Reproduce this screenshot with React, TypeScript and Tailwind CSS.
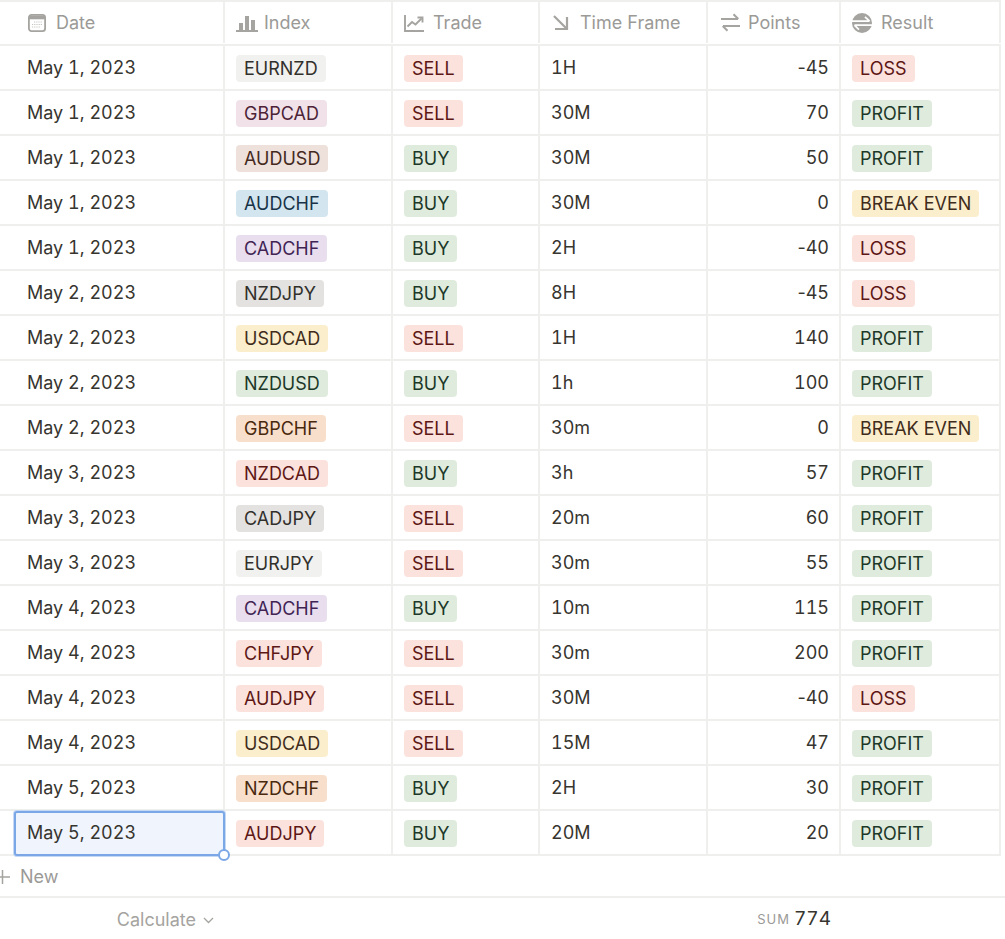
import React from 'react';

type Tone = 'gray' | 'light' | 'pink' | 'brown' | 'blue' | 'purple' | 'yellow' | 'green' | 'orange' | 'red';

const tones: Record<Tone, string> = {
  light: 'bg-[#f1f1ef] text-[#32302c]',
  gray: 'bg-[#e3e2e0] text-[#32302c]',
  pink: 'bg-[#f1e2ea] text-[#4c2337]',
  brown: 'bg-[#eee0da] text-[#442a1e]',
  blue: 'bg-[#d3e5ef] text-[#183347]',
  purple: 'bg-[#e8deee] text-[#412454]',
  yellow: 'bg-[#fbeecd] text-[#402c1b]',
  green: 'bg-[#dfecdd] text-[#1c3829]',
  orange: 'bg-[#f8dfcc] text-[#49290e]',
  red: 'bg-[#fbe2dd] text-[#5d1715]',
};

const indexTone: Record<string, Tone> = {
  EURNZD: 'light',
  GBPCAD: 'pink',
  AUDUSD: 'brown',
  AUDCHF: 'blue',
  CADCHF: 'purple',
  NZDJPY: 'gray',
  USDCAD: 'yellow',
  NZDUSD: 'green',
  GBPCHF: 'orange',
  NZDCAD: 'red',
  CADJPY: 'gray',
  EURJPY: 'light',
  CHFJPY: 'red',
  AUDJPY: 'red',
  NZDCHF: 'orange',
};

const resultTone: Record<string, Tone> = {
  LOSS: 'red',
  PROFIT: 'green',
  'BREAK EVEN': 'yellow',
};

const rows: [string, string, string, string, number, string][] = [
  ['May 1, 2023', 'EURNZD', 'SELL', '1H', -45, 'LOSS'],
  ['May 1, 2023', 'GBPCAD', 'SELL', '30M', 70, 'PROFIT'],
  ['May 1, 2023', 'AUDUSD', 'BUY', '30M', 50, 'PROFIT'],
  ['May 1, 2023', 'AUDCHF', 'BUY', '30M', 0, 'BREAK EVEN'],
  ['May 1, 2023', 'CADCHF', 'BUY', '2H', -40, 'LOSS'],
  ['May 2, 2023', 'NZDJPY', 'BUY', '8H', -45, 'LOSS'],
  ['May 2, 2023', 'USDCAD', 'SELL', '1H', 140, 'PROFIT'],
  ['May 2, 2023', 'NZDUSD', 'BUY', '1h', 100, 'PROFIT'],
  ['May 2, 2023', 'GBPCHF', 'SELL', '30m', 0, 'BREAK EVEN'],
  ['May 3, 2023', 'NZDCAD', 'BUY', '3h', 57, 'PROFIT'],
  ['May 3, 2023', 'CADJPY', 'SELL', '20m', 60, 'PROFIT'],
  ['May 3, 2023', 'EURJPY', 'SELL', '30m', 55, 'PROFIT'],
  ['May 4, 2023', 'CADCHF', 'BUY', '10m', 115, 'PROFIT'],
  ['May 4, 2023', 'CHFJPY', 'SELL', '30m', 200, 'PROFIT'],
  ['May 4, 2023', 'AUDJPY', 'SELL', '30M', -40, 'LOSS'],
  ['May 4, 2023', 'USDCAD', 'SELL', '15M', 47, 'PROFIT'],
  ['May 5, 2023', 'NZDCHF', 'BUY', '2H', 30, 'PROFIT'],
  ['May 5, 2023', 'AUDJPY', 'BUY', '20M', 20, 'PROFIT'],
];

const grid = 'grid grid-cols-[225px_168px_147px_168px_133px_160px] w-[1001px]';

const CalendarIcon = () => (
  <svg width="18" height="18" viewBox="0 0 18 18" className="shrink-0">
    <rect x="0.9" y="0.9" width="16.2" height="16.2" rx="2.6" fill="none" stroke="#a5a4a0" strokeWidth="1.8" />
    <path d="M1 1.5h16v3.8H1z" fill="#a5a4a0" />
    <path d="M6 8h8M4 10.5h10M4 13h8" stroke="#c6c5c2" strokeWidth="1.2" strokeDasharray="1.2 1" />
  </svg>
);

const BarsIcon = () => (
  <svg width="22" height="18" viewBox="0 0 22 18" className="shrink-0" fill="#a5a4a0">
    <rect x="3" y="9" width="4" height="7" />
    <rect x="9" y="2" width="4" height="14" />
    <rect x="15" y="6" width="4" height="10" />
    <rect x="0" y="16" width="22" height="2" />
  </svg>
);

const TrendIcon = () => (
  <svg width="20" height="18" viewBox="0 0 20 18" className="shrink-0" fill="none" stroke="#a5a4a0" strokeWidth="1.9">
    <path d="M1 1v16h19" />
    <path d="M3.5 12.5l4.5-4.5 3.5 2.5 6-6" />
    <path d="M13.5 3.5h5v5" />
  </svg>
);

const ArrowDownRightIcon = () => (
  <svg width="16" height="16" viewBox="0 0 16 16" className="shrink-0" fill="none" stroke="#a5a4a0" strokeWidth="2.2">
    <path d="M1 1l13 13" />
    <path d="M14 2v12H2" />
  </svg>
);

const SwapIcon = () => (
  <svg width="19" height="19" viewBox="0 0 19 19" className="shrink-0" fill="none" stroke="#a5a4a0" strokeWidth="2">
    <path d="M0 6h17M12.5 1.2L17.3 6" />
    <path d="M19 13H2M6.5 17.8L1.7 13" />
  </svg>
);

const ResultIcon = () => (
  <svg width="20" height="20" viewBox="0 0 20 20" className="shrink-0">
    <circle cx="10" cy="10" r="10" fill="#a5a4a0" />
    <path d="M-1 8.2h18.5M13 3.8l4.6 4.4M21 12.2H2.5M7 16.6l-4.6-4.4" fill="none" stroke="#fff" strokeWidth="1.8" />
  </svg>
);

const Tag = ({ label, tone }: { label: string; tone: Tone }) => (
  <span className={`inline-flex h-[27px] items-center rounded-[4px] px-2 text-[18px] leading-none ${tones[tone]}`}>
    {label}
  </span>
);

const HeaderCell = ({ icon, label, gap, pad }: { icon: React.ReactNode; label: string; gap: string; pad: string }) => (
  <div className={`flex h-full items-center border-r-2 border-[#efefee] text-[18px] text-[#9b9a97] ${gap} ${pad}`}>
    {icon}
    <span>{label}</span>
  </div>
);

const cell = 'h-full border-r-2 border-[#efefee]';

export default function App() {
  return (
    <div className="h-[939px] w-[1005px] overflow-hidden bg-white font-['Inter',sans-serif] text-[#37352f]">
      <div className={`${grid} h-[46px] border-y-2 border-[#efefee] pb-[1px]`}>
        <HeaderCell icon={<CalendarIcon />} label="Date" gap="gap-[10px]" pad="pl-[28px]" />
        <HeaderCell icon={<BarsIcon />} label="Index" gap="gap-[6px]" pad="pl-[11px]" />
        <HeaderCell icon={<TrendIcon />} label="Trade" gap="gap-[9px]" pad="pl-[11px]" />
        <HeaderCell icon={<ArrowDownRightIcon />} label="Time Frame" gap="gap-[11px]" pad="pl-[13px]" />
        <HeaderCell icon={<SwapIcon />} label="Points" gap="gap-[8px]" pad="pl-[13px]" />
        <HeaderCell icon={<ResultIcon />} label="Result" gap="gap-[9px]" pad="pl-[11px]" />
      </div>

      {rows.map((r, i) => {
        const selected = i === rows.length - 1;
        return (
          <div key={i} className={`${grid} h-[45px] border-b-2 border-[#efefee]`}>
            <div className={`${cell} relative pl-[27px] pt-[9px] text-[18px] leading-[26px] tabular-nums`}>
              {selected && (
                <div className="absolute -bottom-[2px] left-[14px] -right-[2px] top-[0px] rounded-[3px] border-2 border-[#7ba7e6] bg-[#f0f4fc] shadow-[0_0_0_1px_#c5d9f5]">
                  <span className="absolute -bottom-[7px] -right-[7px] h-[12px] w-[12px] rounded-full border-2 border-[#7ba7e6] bg-white" />
                </div>
              )}
              <span className="relative">{r[0]}</span>
            </div>
            <div className={`${cell} pl-[11px] pt-[9px]`}>
              <Tag label={r[1]} tone={indexTone[r[1]]} />
            </div>
            <div className={`${cell} pl-[11px] pt-[9px]`}>
              <Tag label={r[2]} tone={r[2] === 'SELL' ? 'red' : 'green'} />
            </div>
            <div className={`${cell} pl-[11px] pt-[9px] text-[18px] leading-[26px] tabular-nums`}>{r[3]}</div>
            <div className={`${cell} pr-[10px] pt-[9px] text-right text-[18px] leading-[26px]`}>
              {r[4] < 0 && <span>-</span>}
              <span className="tabular-nums">{Math.abs(r[4])}</span>
            </div>
            <div className={`${cell} pl-[11px] pt-[9px]`}>
              <Tag label={r[5]} tone={resultTone[r[5]]} />
            </div>
          </div>
        );
      })}

      <div className="flex h-[42px] items-center gap-[9px] border-b-2 border-[#efefee] pt-[1px] text-[18px] text-[#9b9a97]">
        <svg width="11" height="16" viewBox="0 0 11 16" fill="none" stroke="#a5a4a0" strokeWidth="1.5">
          <path d="M2.5 1v14M-5 8h15" />
        </svg>
        <span>New</span>
      </div>

      <div className={`${grid} h-[42px]`}>
        <div className="flex items-center justify-end gap-[7px] pr-[11px] text-[18px] text-[#a5a4a0]">
          <span>Calculate</span>
          <svg width="11" height="7" viewBox="0 0 11 7" fill="none" stroke="#a5a4a0" strokeWidth="1.3" className="mt-[2px]">
            <path d="M1 1l4.5 4.5L10 1" />
          </svg>
        </div>
        <div />
        <div />
        <div />
        <div className="flex items-center justify-end gap-[4px] pr-[10px]">
          <span className="mt-[2px] text-[13px] tracking-[1px] text-[#9b9a97]">SUM</span>
          <span className="text-[19px] tabular-nums">774</span>
        </div>
        <div />
      </div>
    </div>
  );
}
